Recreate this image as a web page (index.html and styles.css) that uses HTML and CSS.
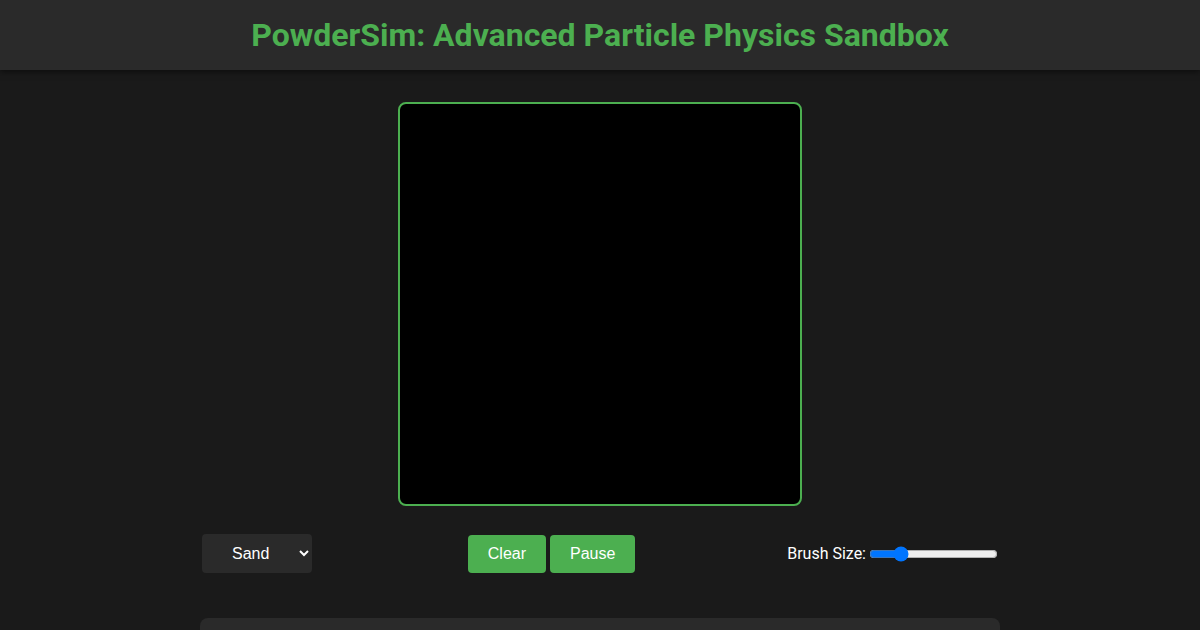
FILE: index.html
```html
<!DOCTYPE html>
<html>
<head>
<meta charset="utf-8">
<title>PowderSim</title>
<link rel="stylesheet" href="styles.css">
</head>
<body>
<header class="header">
  <h1 class="title">PowderSim: Advanced Particle Physics Sandbox</h1>
</header>
<main class="main">
  <canvas class="sim" width="400" height="400"></canvas>
  <div class="controls">
    <select class="element-select">
      <option>Sand</option>
      <option>Water</option>
      <option>Fire</option>
    </select>
    <div class="buttons">
      <button class="btn">Clear</button>
      <button class="btn">Pause</button>
    </div>
    <label class="brush">Brush Size: <input class="range" type="range" min="1" max="20" value="5"></label>
  </div>
  <section class="panel"></section>
</main>
</body>
</html>
```
FILE: styles.css
```css
* { box-sizing: border-box; }
html, body { margin: 0; padding: 0; }
body {
  background: #1a1a1a;
  color: #ffffff;
  font-family: Roboto, "Liberation Sans", sans-serif;
  height: 630px;
  overflow: hidden;
}
.header {
  background: #2a2a2a;
  height: 70px;
  display: flex;
  align-items: center;
  justify-content: center;
  box-shadow: 0 2px 6px rgba(0,0,0,0.5);
  position: relative;
  z-index: 1;
}
.title {
  margin: 0;
  color: #4caf50;
  font-size: 32px;
  font-weight: 700;
  font-family: Roboto, sans-serif;
}
.main {
  display: flex;
  flex-direction: column;
  align-items: center;
  padding-top: 32px;
}
.sim {
  display: block;
  width: 404px;
  height: 404px;
  background: #000;
  border: 2px solid #4caf50;
  border-radius: 8px;
}
.controls {
  width: 800px;
  margin-top: 28px;
  display: flex;
  align-items: center;
  justify-content: space-between;
}
.element-select {
  margin-left: 2px;
  width: 110px;
  height: 39px;
  background: #2a2a2a;
  color: #fff;
  border: none;
  border-radius: 4px;
  padding: 0 12px 0 26px;
  font-family: "Liberation Sans", Arial, sans-serif;
  font-size: 16px;
}
.buttons {
  display: flex;
  gap: 4px;
  margin-left: 4px;
}
.btn {
  background: #4caf50;
  color: #fff;
  border: none;
  border-radius: 4px;
  padding: 0 20px;
  height: 38px;
  font-family: "Liberation Sans", Arial, sans-serif;
  font-size: 16px;
}
.brush {
  display: flex;
  align-items: center;
  font-size: 16px;
  color: #fff;
  gap: 0;
}
.range {
  width: 129px;
  margin: 2px 2px 2px 3px;
}
.panel {
  width: 800px;
  height: 100px;
  margin-top: 45px;
  background: #2a2a2a;
  border-radius: 8px;
}
```
